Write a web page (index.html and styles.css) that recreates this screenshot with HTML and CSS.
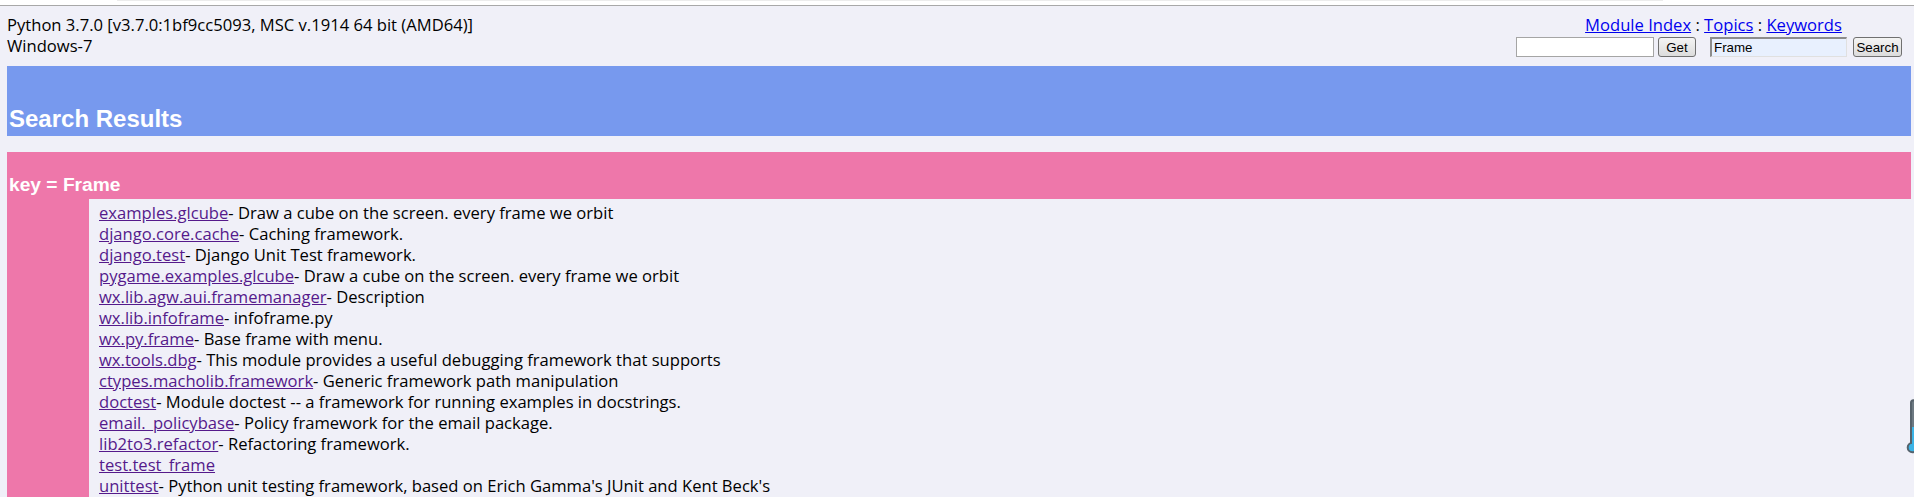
FILE: index.html
```html
<!DOCTYPE html>
<html lang="en">
<head>
<meta charset="utf-8">
<title>Pydoc: Search Results</title>
<link rel="stylesheet" href="styles.css">
</head>
<body>
<div class="chrome"><div class="chrome-line"></div></div>
<div class="page">
  <header class="top">
    <div class="sysinfo">Python 3.7.0 [v3.7.0:1bf9cc5093, MSC v.1914 64 bit (AMD64)]<br>Windows-7</div>
    <div class="nav">
      <div class="navlinks"><a href="#">Module Index</a> : <a href="#">Topics</a> : <a href="#">Keywords</a></div>
      <div class="forms">
        <form class="form-get"><input class="field" type="text"><button class="btn btn-get" type="button">Get</button></form>
        <form class="form-search"><input class="field filled" type="text" value="Frame"><button class="btn btn-search" type="button">Search</button></form>
      </div>
    </div>
  </header>
  <div class="heading"><h1>Search Results</h1></div>
  <section class="section">
    <div class="sec-head"><h2>key = Frame</h2></div>
    <div class="sec-body">
      <div class="gutter"></div>
      <ul class="results">
        <li><a href="#">examples.glcube</a>- Draw a cube on the screen. every frame we orbit</li>
        <li><a href="#">django.core.cache</a>- Caching framework.</li>
        <li><a href="#">django.test</a>- Django Unit Test framework.</li>
        <li><a href="#">pygame.examples.glcube</a>- Draw a cube on the screen. every frame we orbit</li>
        <li><a href="#">wx.lib.agw.aui.framemanager</a>- Description</li>
        <li><a href="#">wx.lib.infoframe</a>- infoframe.py</li>
        <li><a href="#">wx.py.frame</a>- Base frame with menu.</li>
        <li><a href="#">wx.tools.dbg</a>- This module provides a useful debugging framework that supports</li>
        <li><a href="#">ctypes.macholib.framework</a>- Generic framework path manipulation</li>
        <li><a href="#">doctest</a>- Module doctest -- a framework for running examples in docstrings.</li>
        <li><a href="#">email._policybase</a>- Policy framework for the email package.</li>
        <li><a href="#">lib2to3.refactor</a>- Refactoring framework.</li>
        <li><a href="#">test.test_frame</a></li>
        <li><a href="#">unittest</a>- Python unit testing framework, based on Erich Gamma's JUnit and Kent Beck's</li>
      </ul>
    </div>
  </section>
</div>
<svg class="thermo" viewBox="0 0 8 58" width="8" height="58" aria-hidden="true">
  <rect x="5" y="3.3" width="12" height="46" rx="2.5" fill="#6d7982" stroke="#56626b" stroke-width="2"/>
  <rect x="6" y="30" width="10" height="20" fill="#3bb3e6"/>
  <circle cx="6.5" cy="50.5" r="4.8" fill="#3bb3e6" stroke="#56626b" stroke-width="2"/>
  <rect x="6" y="44" width="10" height="9" fill="#3bb3e6"/>
</svg>
</body>
</html>
```
FILE: styles.css
```css
html, body {
  margin: 0;
  padding: 0;
}
body {
  background: #f0f0f8;
  color: #000;
  font-family: "Open Sans", "Noto Sans", sans-serif;
  font-size: 16.6px;
  line-height: 21px;
  overflow: hidden;
  height: 497px;
}
.chrome {
  height: 5px;
  background: #fff;
  border-bottom: 1px solid #a8a8a8;
  display: flex;
}
.chrome-line {
  margin-left: 117px;
  width: 1546px;
  height: 1px;
  background: #ececec;
}
.page {
  padding: 8px 3px 0 7px;
}
.top {
  display: flex;
  justify-content: space-between;
  align-items: flex-start;
  margin-bottom: 9px;
}
.nav {
  display: flex;
  flex-direction: column;
  align-items: center;
}
.navlinks a {
  color: #0000ee;
  text-decoration: underline;
}
.forms {
  display: flex;
  align-items: center;
  margin-top: 2px;
  padding-right: 9px;
}
.forms form {
  display: flex;
  align-items: center;
  margin: 0;
}
.form-search {
  margin-left: 14px !important;
}
.field {
  width: 138px;
  height: 20px;
  box-sizing: border-box;
  border: 1px solid #a5a5a5;
  background: #fff;
  font: 13.33px "Liberation Sans", Arial, sans-serif;
  padding: 1px 2px;
  margin: 0;
  color: #000;
}
.field.filled {
  width: 137px;
  background: #e8f0fe;
  border-top: 2px solid #8c8c8c;
  border-left: 2px solid #8c8c8c;
  border-right: 1px solid #e0e0e0;
  border-bottom: 1px solid #e0e0e0;
  padding: 0 2px;
}
.btn {
  height: 20px;
  box-sizing: border-box;
  border: 1px solid #707070;
  border-radius: 3px;
  background: linear-gradient(#f4f4f4, #dcdcdc);
  font: 13.33px "Liberation Sans", Arial, sans-serif;
  color: #000;
  padding: 0;
  margin: 0 0 0 4px;
}
.btn-get {
  width: 38px;
}
.btn-search {
  width: 49px;
  margin-left: 6px;
}
.heading {
  background: #7799ee;
  height: 70px;
  box-sizing: border-box;
  display: flex;
  align-items: flex-end;
  padding: 0 2px 3px;
}
.heading h1 {
  margin: 0;
  font: bold 24px/28px "Liberation Sans", Arial, sans-serif;
  color: #fff;
}
.section {
  margin-top: 16px;
}
.sec-head {
  background: #ee77aa;
  height: 47px;
  box-sizing: border-box;
  display: flex;
  align-items: flex-end;
  padding: 0 2px 3px;
}
.sec-head h2 {
  margin: 0;
  font: bold 19.2px/22px "Liberation Sans", Arial, sans-serif;
  color: #fff;
}
.sec-body {
  display: flex;
  min-height: 300px;
}
.gutter {
  flex: none;
  width: 82px;
  background: #ee77aa;
}
.results {
  list-style: none;
  margin: 0;
  padding: 3px 0 2px 10px;
}
.results a {
  color: #551a8b;
  text-decoration: underline;
}
.thermo {
  position: absolute;
  top: 397px;
  right: 0;
  display: block;
}
```
